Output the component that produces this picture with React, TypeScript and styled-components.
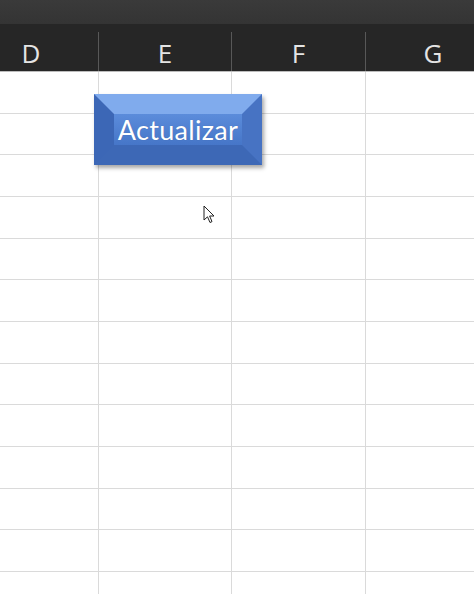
import React from "react";
import styled, { createGlobalStyle } from "styled-components";

const GlobalStyle = createGlobalStyle`
  html, body { margin: 0; padding: 0; background: #ffffff; }
  body { width: 474px; height: 594px; overflow: hidden; }
  #root { width: 474px; height: 594px; }
`;

const Sheet = styled.div`
  position: relative;
  width: 474px;
  height: 594px;
  overflow: hidden;
  background: #ffffff;
  font-family: "Open Sans", "Noto Sans", sans-serif;
`;

const TopBar = styled.div`
  height: 24px;
  background: linear-gradient(#3a3a3a, #343434);
`;

const Columns = styled.div`
  display: grid;
  grid-template-columns: 135px 133px 134px 134px;
  margin-left: -36px;
`;

const HeaderRow = styled(Columns)`
  height: 48px;
  box-sizing: border-box;
  padding-top: 8px;
  background: #262626;
  border-bottom: 1px solid #bcbcbc;
`;

const HeaderCell = styled.div<{ $last?: boolean }>`
  display: flex;
  align-items: center;
  justify-content: center;
  border-right: ${(p) => (p.$last ? "none" : "1px solid #585858")};
  color: #e4e4e4;
  font-size: 26px;
  font-weight: 400;
  line-height: 1;
  padding-top: 2px;
`;

const Row = styled(Columns)`
  height: 41.67px;
  box-sizing: border-box;
  border-bottom: 1px solid #dadada;
`;

const Cell = styled.div<{ $last?: boolean }>`
  border-right: ${(p) => (p.$last ? "none" : "1px solid #dadada")};
`;

const BevelButton = styled.button`
  position: absolute;
  left: 94px;
  top: 94px;
  width: 168px;
  height: 71px;
  box-sizing: border-box;
  margin: 0;
  padding: 0;
  border-style: solid;
  border-width: 20px;
  border-top-color: #80abed;
  border-left-color: #3c67b6;
  border-right-color: #4773c3;
  border-bottom-color: #3d68b6;
  background: linear-gradient(#5b8cdb, #4676c8);
  box-shadow: 2px 3px 4px rgba(0, 0, 0, 0.35);
  display: flex;
  align-items: center;
  justify-content: center;
  overflow: visible;
  cursor: default;
`;

const ButtonLabel = styled.span`
  font-family: "Lato", "Open Sans", sans-serif;
  font-size: 27px;
  font-weight: 400;
  color: #ffffff;
  white-space: nowrap;
  line-height: 1;
  letter-spacing: 0.3px;
  text-shadow: 0 0 1px rgba(0, 0, 0, 0.2);
`;

const Pointer = styled.svg`
  position: absolute;
  left: 203px;
  top: 205px;
  width: 12px;
  height: 19px;
  pointer-events: none;
`;

const letters = ["D", "E", "F", "G"];

export default function App() {
  const rows = Array.from({ length: 13 }, (_, i) => i);
  return (
    <>
      <GlobalStyle />
      <Sheet>
        <TopBar />
        <HeaderRow>
          {letters.map((l, i) => (
            <HeaderCell key={l} $last={i === letters.length - 1}>
              {l}
            </HeaderCell>
          ))}
        </HeaderRow>
        {rows.map((r) => (
          <Row key={r}>
            {letters.map((l, i) => (
              <Cell key={l} $last={i === letters.length - 1} />
            ))}
          </Row>
        ))}
        <BevelButton>
          <ButtonLabel>Actualizar</ButtonLabel>
        </BevelButton>
        <Pointer viewBox="0 0 12 19">
          <path
            d="M1 1 L1 15 L4.5 11.8 L7 17.5 L9 16.6 L6.6 11 L11 11 Z"
            fill="#ffffff"
            stroke="#222222"
            strokeWidth="1"
            strokeLinejoin="miter"
          />
        </Pointer>
      </Sheet>
    </>
  );
}
